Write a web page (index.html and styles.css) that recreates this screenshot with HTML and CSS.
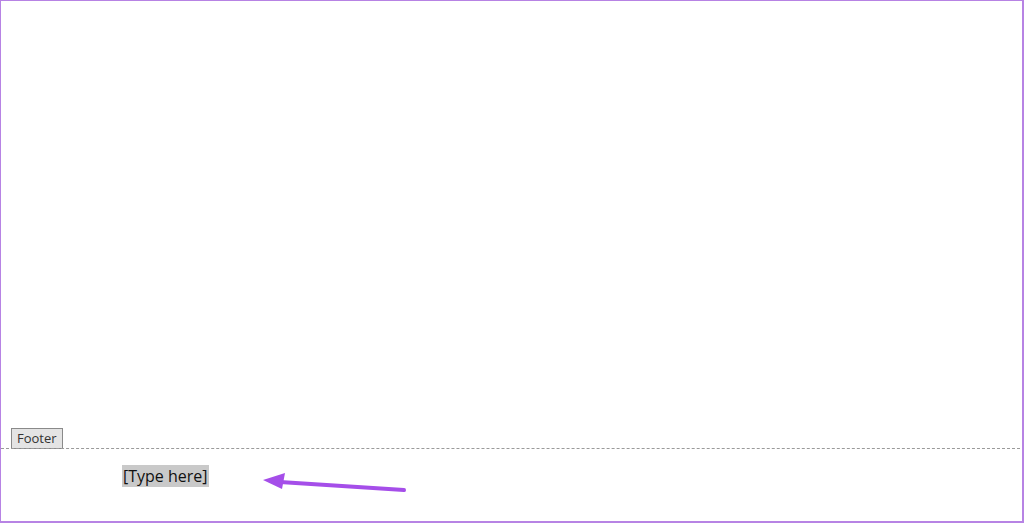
FILE: index.html
```html
<!DOCTYPE html>
<html>
<head>
<meta charset="utf-8">
<link rel="stylesheet" href="styles.css">
</head>
<body>
<div class="page">
  <div class="doc-body"></div>
  <div class="footer-zone">
    <div class="footer-tag">Footer</div>
    <div class="footer-line"></div>
    <div class="footer-row">
      <span class="placeholder">[Type here]</span>
    </div>
  </div>
  <svg class="arrow" width="1024" height="523" viewBox="0 0 1024 523">
    <line x1="404" y1="490" x2="280" y2="482" stroke="#a54ee9" stroke-width="4" stroke-linecap="round"/>
    <polygon points="263,480 285,473 282,489" fill="#a54ee9"/>
  </svg>
</div>
</body>
</html>
```
FILE: styles.css
```css
html, body {
  margin: 0;
  padding: 0;
  background: #ffffff;
}
.page {
  position: relative;
  width: 1024px;
  height: 523px;
  box-sizing: border-box;
  border: 1px solid #b783e4;
  border-bottom-width: 2px;
  border-right-width: 2px;
  display: flex;
  flex-direction: column;
  font-family: "Open Sans", "Noto Sans", sans-serif;
  overflow: hidden;
}
.doc-body {
  flex: 1;
}
.footer-zone {
  height: 93px;
  display: flex;
  flex-direction: column;
}
.footer-tag {
  align-self: flex-start;
  margin-left: 10px;
  height: 19px;
  padding: 0 5px;
  border: 1px solid #8a8a8a;
  background: #e4e4e4;
  color: #333;
  font-size: 13px;
  line-height: 19px;
}
.footer-line {
  border-top: 1px dashed #9a9a9a;
  margin-top: -1px;
  margin-right: 2px;
}
.footer-row {
  padding-left: 121px;
  margin-top: 16px;
}
.placeholder {
  display: inline-block;
  background: #c9c9c9;
  color: #111;
  font-size: 16px;
  line-height: 22px;
  height: 22px;
  padding: 0 1px;
}
.arrow {
  position: absolute;
  left: -1px;
  top: -1px;
  pointer-events: none;
}
```
